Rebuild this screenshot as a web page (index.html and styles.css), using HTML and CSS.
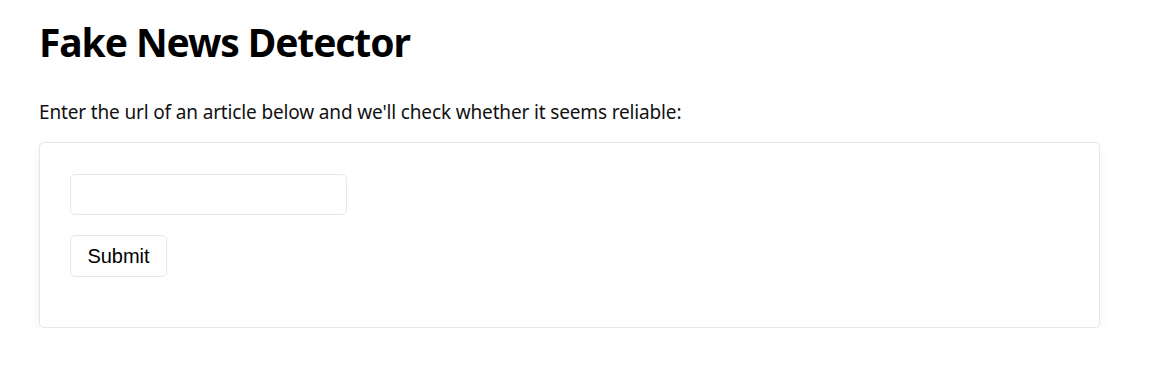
FILE: index.html
```html
<!DOCTYPE html>
<html>
<head>
<meta charset="utf-8">
<link rel="stylesheet" href="styles.css">
</head>
<body>
<main class="page">
  <h1 class="title">Fake News Detector</h1>
  <p class="intro">Enter the url of an article below and we'll check whether it seems reliable:</p>
  <form class="card">
    <input class="url-input" type="text">
    <button class="submit" type="button">Submit</button>
  </form>
</main>
</body>
</html>
```
FILE: styles.css
```css
html, body {
  margin: 0;
  padding: 0;
  background: #fff;
}
body {
  font-family: "Noto Sans", "Open Sans", sans-serif;
  color: #000;
}
.page {
  width: 1061px;
  margin-left: 39px;
  padding-top: 14px;
}
.title {
  margin: 0;
  font-size: 39px;
  font-weight: 700;
  line-height: 56px;
  letter-spacing: -1.1px;
}
.intro {
  margin: 30px 0 0;
  font-size: 19px;
  line-height: 24px;
  letter-spacing: -0.15px;
  color: #111;
}
.card {
  margin-top: 18px;
  box-sizing: border-box;
  height: 186px;
  border: 1px solid #e6e6e6;
  border-radius: 5px;
  padding: 31px 30px 30px;
  box-shadow: 0 4px 12px rgba(0, 0, 0, 0.05);
  display: flex;
  flex-direction: column;
  align-items: flex-start;
  gap: 20px;
}
.url-input {
  box-sizing: border-box;
  width: 277px;
  height: 41px;
  border: 1px solid #e8e8e8;
  border-radius: 5px;
  margin: 0;
  padding: 0 10px;
  font-size: 18px;
  outline: none;
}
.submit {
  box-sizing: border-box;
  width: 97px;
  height: 42px;
  border: 1px solid #e8e8e8;
  border-radius: 5px;
  background: #fff;
  font-family: "Liberation Sans", Arial, sans-serif;
  font-size: 20px;
  color: #000;
  padding: 0;
  margin: 0;
}
```
